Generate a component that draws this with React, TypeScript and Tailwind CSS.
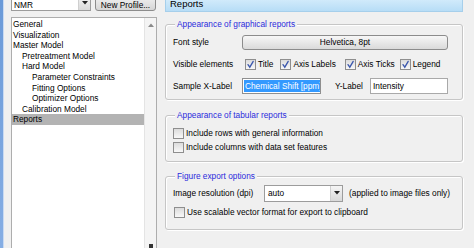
import React from "react";

function Check({ checked, className = "" }: { checked?: boolean; className?: string }) {
  return (
    <span
      className={
        "flex h-[11px] w-[11px] shrink-0 items-center justify-center border border-[#8e8e8e] bg-linear-to-b from-[#dcdcdc] to-[#f8f8f8] " +
        className
      }
    >
      {checked && (
        <svg width="9" height="9" viewBox="0 0 9 9">
          <path d="M2 4.6 L3.8 7.2 L7.2 1.4" stroke="#3c58ad" strokeWidth="1.3" fill="none" strokeLinecap="round" />
        </svg>
      )}
    </span>
  );
}

function Arrow() {
  return (
    <span className="flex w-[12px] items-center justify-center border-l border-[#cfcfcf] bg-linear-to-b from-[#f5f5f5] to-[#d9d9d9]">
      <svg width="6" height="4" viewBox="0 0 6 4">
        <path d="M0 0 L6 0 L3 3.5 Z" fill="#222" />
      </svg>
    </span>
  );
}

function Group({ title, className, children }: { title: string; className: string; children: React.ReactNode }) {
  return (
    <div className={"relative rounded-[3px] border border-[#c6c6c6] shadow-[inset_1px_1px_0_#ffffff,1px_1px_0_#ffffff] " + className}>
      <span className="absolute -top-[6px] left-[9px] bg-[#f0f0f0] px-[2px] leading-[10px] text-[#2b2bdc]">{title}</span>
      {children}
    </div>
  );
}

const items: { label: string; indent: string; selected?: boolean }[] = [
  { label: "General", indent: "pl-[1px]" },
  { label: "Visualization", indent: "pl-[1px]" },
  { label: "Master Model", indent: "pl-[1px]" },
  { label: "Pretreatment Model", indent: "pl-[10px]" },
  { label: "Hard Model", indent: "pl-[10px]" },
  { label: "Parameter Constraints", indent: "pl-[20px]" },
  { label: "Fitting Options", indent: "pl-[20px]" },
  { label: "Optimizer Options", indent: "pl-[20px]" },
  { label: "Calibration Model", indent: "pl-[10px]" },
  { label: "Reports", indent: "pl-[1px]", selected: true },
];

export default function App() {
  return (
    <div className="flex h-[248px] w-[474px] overflow-hidden bg-[#f0f0f0] font-['Liberation_Sans',Arial,sans-serif] text-[8.3px] leading-[10px] text-black">
      <div className="w-[3px] shrink-0 bg-linear-to-b from-[#6b9ad8] to-[#86aee4]" />
      <div className="w-[1px] shrink-0 bg-[#c9daf2]" />

      {/* left panel */}
      <div className="flex w-[153px] shrink-0 flex-col pl-[7px]">
        <div className="-mt-[6px] flex h-[17px] shrink-0">
          <div className="flex w-[80px] border border-[#9c9c9c] bg-white">
            <span className="flex flex-1 items-center pl-[2px] pt-[5px]">NMR</span>
            <Arrow />
          </div>
          <div className="ml-[4px] flex w-[61px] items-center justify-center rounded-[3px] border border-[#8c8c8c] bg-linear-to-b from-[#f4f4f4] to-[#d6d6d6] pt-[5px]">
            New Profile...
          </div>
        </div>
        <div className="mt-[6px] flex h-[240px] shrink-0 border border-[#adadad] bg-white">
          <div className="flex flex-1 flex-col pt-[1px]">
            {items.map((it) => (
              <div
                key={it.label}
                className={"h-[10.6px] leading-[10.6px] whitespace-nowrap " + it.indent + (it.selected ? " bg-[#b3b3b3]" : "")}
              >
                {it.label}
              </div>
            ))}
          </div>
          <div className="flex w-[12px] flex-col items-center border-l border-[#e4e4e4] bg-[#f4f4f4]">
            <svg className="mt-[5px]" width="6" height="4" viewBox="0 0 6 4">
              <path d="M0 4 L6 4 L3 0.5 Z" fill="#8a8a8a" />
            </svg>
            <div className="flex-1" />
            <div className="mb-[8px] h-[4px] w-[4px] bg-[#333]" />
          </div>
        </div>
      </div>

      {/* right panel */}
      <div className="flex w-[298px] shrink-0 flex-col pl-[0px] ml-[8px]">
        <div className="-mt-[6px] flex h-[18px] shrink-0 items-center border border-[#a6cfeb] bg-linear-to-b from-[#dcf0fd] to-[#b7ddf6] pl-[4px] pt-[2px] text-[9.5px]">
          Reports
        </div>

        <Group title="Appearance of graphical reports" className="mt-[12px] h-[76px] shrink-0 pl-[7px] pt-[6px]">
          <div className="flex h-[22px] items-center">
            <span className="w-[69px] shrink-0">Font style</span>
            <div className="flex h-[15px] w-[206px] items-center justify-center rounded-[3px] border border-[#8c8c8c] bg-linear-to-b from-[#f7f7f7] to-[#dadada]">
              Helvetica, 8pt
            </div>
          </div>
          <div className="flex h-[22px] items-center">
            <span className="w-[69px] shrink-0">Visible elements</span>
            <Check checked className="ml-[3px]" />
            <span className="ml-[2px]">Title</span>
            <Check checked className="ml-[7px]" />
            <span className="ml-[2px]">Axis Labels</span>
            <Check checked className="ml-[9px]" />
            <span className="ml-[2px]">Axis Ticks</span>
            <Check checked className="ml-[5px]" />
            <span className="ml-[2px]">Legend</span>
          </div>
          <div className="flex h-[22px] items-center">
            <span className="w-[69px] shrink-0">Sample X-Label</span>
            <div className="flex h-[16px] w-[79px] items-stretch overflow-hidden border border-[#8f8f8f] bg-white p-[1px]">
              <span className="flex items-center whitespace-nowrap bg-[#3399ff] pl-[1px] text-white">Chemical Shift [ppm]</span>
            </div>
            <span className="ml-[14px] w-[35px] shrink-0">Y-Label</span>
            <div className="flex h-[16px] w-[78px] items-center border border-[#a9a9a9] bg-white pl-[2px]">Intensity</div>
          </div>
        </Group>

        <Group title="Appearance of tabular reports" className="mt-[15px] h-[47px] shrink-0 pl-[7px] pt-[10px]">
          <div className="flex h-[14px] items-center">
            <Check />
            <span className="ml-[2px]">Include rows with general information</span>
          </div>
          <div className="flex h-[14px] items-center">
            <Check />
            <span className="ml-[2px]">Include columns with data set features</span>
          </div>
        </Group>

        <Group title="Figure export options" className="mt-[14px] h-[54px] shrink-0 pl-[7px] pt-[7px]">
          <div className="flex h-[18px] items-center">
            <span className="w-[91px] shrink-0">Image resolution (dpi)</span>
            <div className="flex h-[17px] w-[79px] border border-[#9c9c9c] bg-white">
              <span className="flex flex-1 items-center pl-[3px]">auto</span>
              <Arrow />
            </div>
            <span className="ml-[6px]">(applied to image files only)</span>
          </div>
          <div className="flex h-[20px] items-center pl-[1px]">
            <Check />
            <span className="ml-[2px]">Use scalable vector format for export to clipboard</span>
          </div>
        </Group>
      </div>
    </div>
  );
}
